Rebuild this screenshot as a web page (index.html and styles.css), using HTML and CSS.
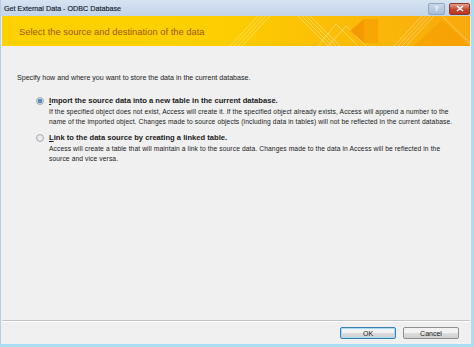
FILE: index.html
```html
<!DOCTYPE html>
<html lang="en">

<head>
  <meta charset="UTF-8">
  <title>Get External Data - ODBC Database</title>
  <link rel="stylesheet" href="styles.css">
</head>

<body>
  <main class="window">
    <header class="titlebar">
      <span class="title">Get External Data - ODBC Database</span>
      <div class="caption-buttons">
        <span class="cap-btn help">?</span>
        <span class="cap-btn close">
          <svg width="8" height="7" viewBox="0 0 8 7">
            <path d="M1 1 L7 6 M7 1 L1 6" stroke="#fff" stroke-width="1.6" />
          </svg>
        </span>
      </div>
    </header>

    <section class="banner">
      <h1 class="banner-title">Select the source and destination of the data</h1>
      <svg class="banner-art" width="469" height="30" viewBox="0 0 469 30">
        <g stroke="rgba(255,255,255,0.5)" stroke-width="0.7" fill="none">
          <path d="M228 30 L256 0 M232 30 L260 0 M236 30 L264 0 M240 30 L268 0" />
          <path d="M296 0 L326 30 M300 0 L330 30 M304 0 L334 30 M308 0 L338 30" />
          <path d="M316 30 L334 8 L356 30" />
          <path d="M326 30 L344 10 L364 30" />
          <path d="M392 30 L420 0 M396 30 L424 0 M400 30 L428 0 M404 30 L432 0" />
          <path d="M440 0 L469 28" />
        </g>
        <polygon points="348,15 362,3 362,27" fill="rgba(240,125,0,0.55)" />
        <polygon points="362,3 376,3 376,27 362,27" fill="rgba(245,145,0,0.45)" />
        <polygon points="412,30 440,4 468,30" fill="rgba(245,155,0,0.55)" />
      </svg>
    </section>

    <section class="content">
      <p class="intro">Specify how and where you want to store the data in the current database.</p>

      <div class="option">
        <span class="radio checked"></span>
        <div class="option-text">
          <p class="option-label"><u>I</u>mport the source data into a new table in the current database.</p>
          <p class="option-desc">If the specified object does not exist, Access will create it. If the specified object already exists, Access will append a number to the<br>name of the imported object. Changes made to source objects (including data in tables) will not be reflected in the current database.</p>
        </div>
      </div>

      <div class="option">
        <span class="radio"></span>
        <div class="option-text">
          <p class="option-label"><u>L</u>ink to the data source by creating a linked table.</p>
          <p class="option-desc">Access will create a table that will maintain a link to the source data. Changes made to the data in Access will be reflected in the<br>source and vice versa.</p>
        </div>
      </div>
    </section>

    <footer class="footer">
      <button class="btn default">OK</button>
      <button class="btn">Cancel</button>
    </footer>
  </main>
</body>

</html>
```

FILE: styles.css
```css
*,
*::before,
*::after {
  box-sizing: border-box;
  margin: 0;
  padding: 0;
}

:root {
  --face: #f0f0f0;
  --frame-cyan: #a9ddef;
  --text: #1a1a1a;
  --ff-ui: 'Liberation Sans', 'DejaVu Sans', sans-serif;
}

body {
  width: 474px;
  height: 347px;
  background-color: var(--frame-cyan);
  font-family: var(--ff-ui);
  color: var(--text);
}

.window {
  display: flex;
  flex-direction: column;

  width: 471px;
  height: 344px;
  border-left: 1px solid #b7cde4;
  background-color: var(--face);
}

/* TITLE BAR */
.titlebar {
  display: flex;
  align-items: center;
  justify-content: space-between;

  height: 16px;
  padding-left: 3px;
  padding-right: 1px;

  background: linear-gradient(#d6e3f1, #c3d4e8);
}

.title {
  font-size: 7.2px;
  color: #14202e;
  -webkit-text-stroke: 0.15px #14202e;
}

.caption-buttons {
  display: flex;
  gap: 4px;
  margin-top: 1px;
}

.cap-btn {
  display: grid;
  place-items: center;

  height: 12px;
  border-radius: 2px;
  font-size: 8px;
  font-weight: bold;
}

.help {
  width: 17px;
  color: #ffffff;
  border: 1px solid #8fa7c2;
  background: linear-gradient(#c9d8e9, #a6bcd6);
}

.close {
  width: 21px;
  border: 1px solid #8a3a2c;
  background: linear-gradient(#e4a290, #c5452f 55%, #b83622);
}

/* BANNER */
.banner {
  position: relative;
  overflow: hidden;

  height: 30px;
  margin-inline: 1px;
  padding-left: 17px;

  display: flex;
  align-items: center;

  background: linear-gradient(90deg, #fdd200 0%, #fdcf00 45%, #fbbb08 75%, #f8a90c 100%);
}

.banner-title {
  position: relative;
  z-index: 1;

  font-size: 9.4px;
  font-weight: normal;
  color: #9a5b06;
}

.banner-art {
  position: absolute;
  left: 0;
  top: 0;
}

/* CONTENT */
.content {
  flex: 1;
  padding: 28px 16px 0 16px;
}

.intro {
  font-size: 7.1px;
  margin-bottom: 14px;
}

.option {
  display: flex;
  gap: 5px;
  padding-left: 19px;
  margin-bottom: 6px;
}

.radio {
  flex: none;
  width: 8px;
  height: 8px;
  margin-top: 1px;

  border: 1px solid #a7aeb6;
  border-radius: 50%;
  background: radial-gradient(circle, #f4f4f4, #dcdcdc);
}

.radio.checked {
  background: radial-gradient(circle, #5b8bbf 0 2px, #cdd6e0 2.5px);
}

.option-label {
  font-size: 7.6px;
  font-weight: bold;
  line-height: 10px;
  margin-bottom: 1px;
}

.option-desc {
  font-size: 6.7px;
  line-height: 10px;
  letter-spacing: 0.1px;
  white-space: nowrap;
}

/* FOOTER */
.footer {
  display: flex;
  justify-content: flex-end;
  gap: 7px;

  height: 24px;
  padding-top: 6px;
  padding-right: 11px;
  margin-inline: 1px;

  border-top: 1px solid #c4c4c4;
  box-shadow: inset 0 1px 0 #ffffff;
}

.btn {
  width: 56px;
  height: 12px;

  border: 1px solid #8e8f8f;
  border-radius: 2px;
  background: linear-gradient(#f2f2f2 50%, #dddddd 50%, #cfcfcf);

  font-family: var(--ff-ui);
  font-size: 7px;
  color: var(--text);
}

.btn.default {
  border-color: #3c7fb1;
  box-shadow: inset 0 0 0 1px #a8dbf4;
}
```
